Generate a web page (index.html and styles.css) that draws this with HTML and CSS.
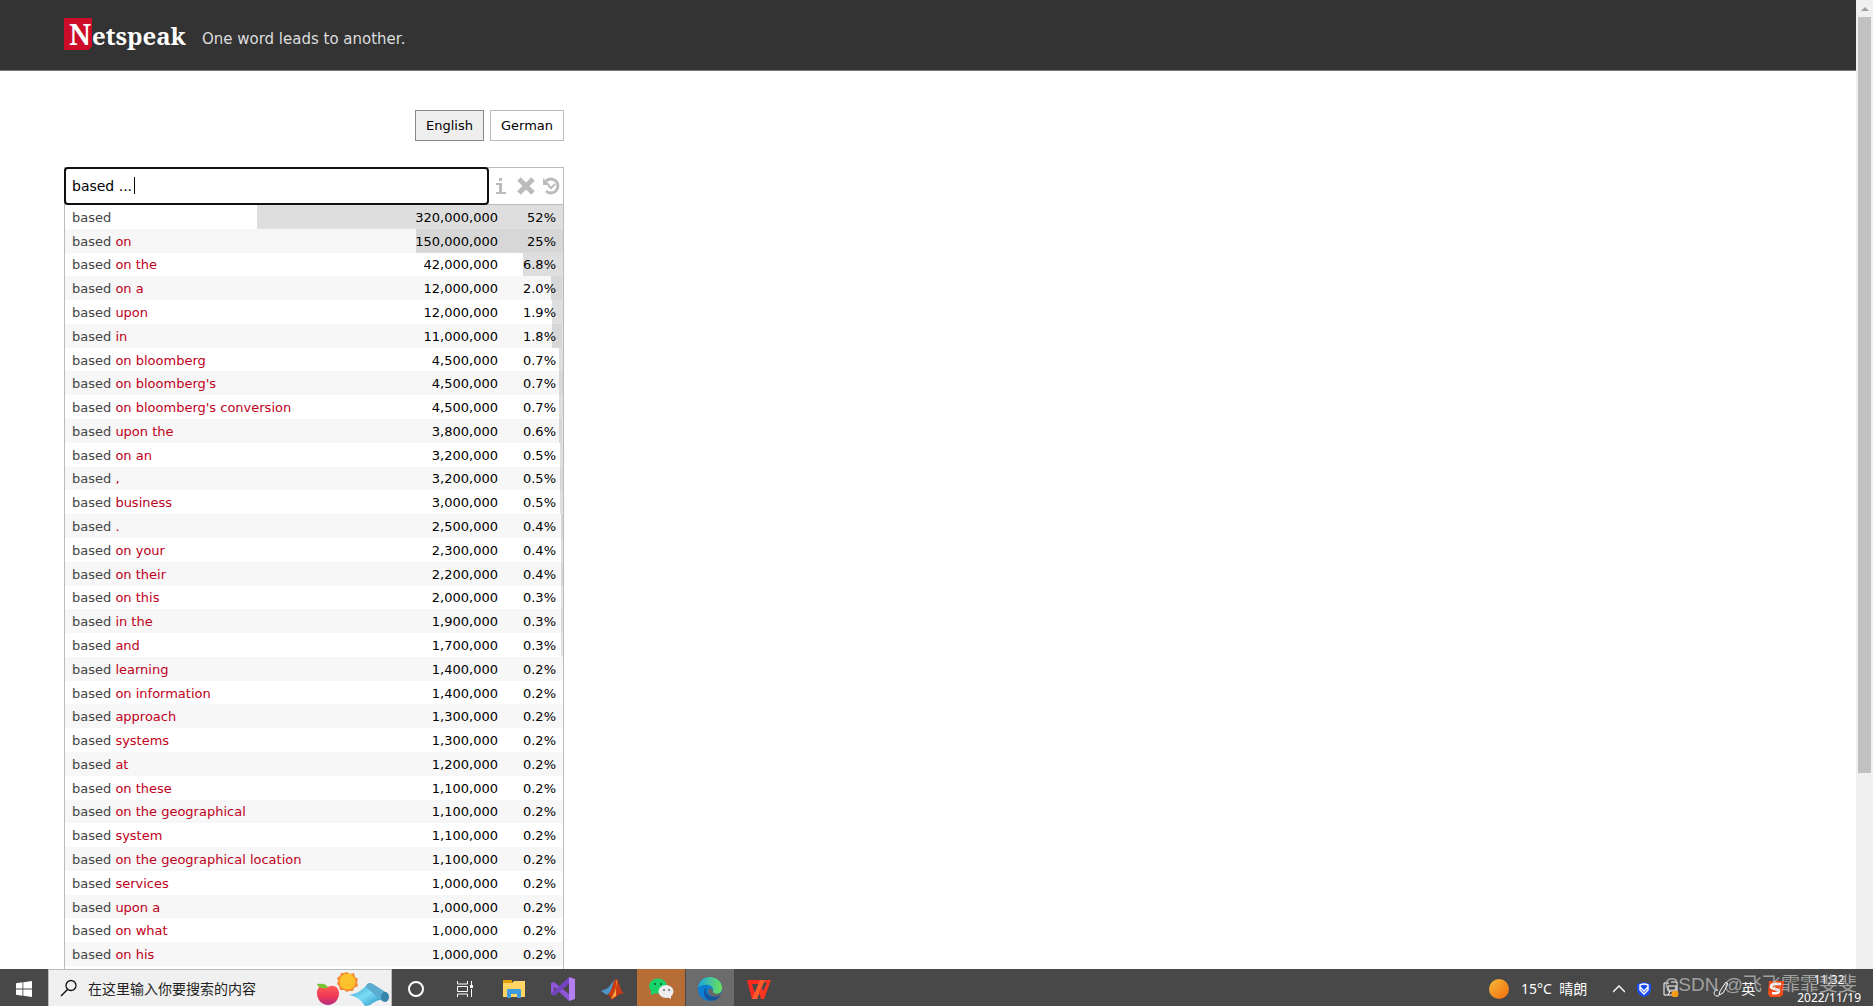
FILE: index.html
```html
<!DOCTYPE html>
<html lang="en">
<head>
<meta charset="utf-8">
<title>Netspeak</title>
<link rel="stylesheet" href="styles.css">
</head>
<body>
<div class="viewport">
  <div class="page">
    <header class="header">
      <a class="logo" href="#"><span class="logo-mark">N</span>etspeak</a>
      <p class="tagline">One word leads to another.</p>
    </header>
    <main class="content">
      <div class="languages">
        <button class="language selected" type="button">English</button>
        <button class="language" type="button">German</button>
      </div>
      <section class="search">
        <div class="query">
          <div class="query-box">
            <input class="query-input" type="text" value="based ..." aria-label="Query">
            <span class="caret"></span>
          </div>
          <div class="tools">
            <button class="tool" type="button" aria-label="Info"><svg width="20" height="20" viewBox="0 0 20 20"><path d="M8 2h3v3H8zM5 7h6v9h4v2H5v-2h3V9H5z" fill="#bbb"/></svg></button>
            <button class="tool" type="button" aria-label="Clear"><svg width="20" height="20" viewBox="0 0 20 20"><path d="M3 3l14 14M17 3L3 17" stroke="#bbb" stroke-width="5" fill="none"/></svg></button>
            <button class="tool" type="button" aria-label="History"><svg width="20" height="20" viewBox="0 0 20 20"><path d="M5 5a7 7 0 1 1 0 10" stroke="#bbb" stroke-width="3" fill="none"/><path d="M2 2v7h7z" fill="#bbb"/><path d="M7 9l3 3 4-4" stroke="#bbb" stroke-width="2" fill="none"/></svg></button>
          </div>
        </div>
        <div class="results">
          <table class="table">
            <tbody id="rows"></tbody>
          </table>
        </div>
      </section>
    </main>
  </div>
  <div class="scrollbar"><span class="scroll-arrow"></span><span class="scroll-thumb"></span></div>
</div>
<footer class="taskbar">
  <button class="task start" type="button" aria-label="Start"><svg width="16" height="16" viewBox="0 0 16 16"><path d="M0 2.200L6.500 1.300V7.600H0zM7.300 1.200L16 0V7.600H7.300zM0 8.400H6.500V14.700L0 13.800zM7.300 8.400H16V16L7.300 14.800z" fill="#fff"/></svg></button>
  <div class="finder">
    <svg width="18" height="18" viewBox="0 0 18 18"><circle cx="11" cy="6.500" r="5" fill="none" stroke="#111" stroke-width="1.300"/><path d="M7.500 10.500L1 17" stroke="#111" stroke-width="1.500"/></svg>
    <input class="finder-input" type="text" placeholder="在这里输入你要搜索的内容" aria-label="搜索">
    <svg class="art" width="74" height="36" viewBox="0 0 74 36">
      <defs>
        <linearGradient id="apple" x2="0" y2="1"><stop stop-color="#ff5d55"/><stop offset=".6" stop-color="#ee3558"/><stop offset="1" stop-color="#b02f83"/></linearGradient>
        <linearGradient id="mat" x2="1" y2="1"><stop stop-color="#3aa0cf"/><stop offset=".5" stop-color="#7adcf5"/><stop offset="1" stop-color="#2b8fc4"/></linearGradient>
      </defs>
      <path d="M31 2l3 2 4-1 1 4 3 2-1 3 1 4-4 2-1 3-4 0-2 1-3-2-4 0-1-4-2-2 1-3-1-3 3-2 1-3 3 0z" fill="#f58a33"/><circle cx="31.500" cy="11.500" r="8" fill="#fcc22e"/>
      <path d="M12 17C6 13 1 17 1 23c0 7 5 12 11 12s11-5 11-12c0-6-6-9-11-6z" fill="url(#apple)"/><path d="M12 18C5 19 2 17 1 14c6-1 10 0 11 4z" fill="#79c431"/>
      <path d="M33 25c7-1 12-4 18-10l15 15c-7-1-10 6-17 6-3-5-9-10-16-11z" fill="url(#mat)"/><path d="M50 17c0-4 4-5 7-3l14 9c3 4 0 9-5 8z" fill="#5aacd0"/><ellipse cx="69" cy="27" rx="4" ry="5" fill="#3685aa"/>
    </svg>
  </div>
  <nav class="tasks">
    <button class="task" type="button" aria-label="Cortana"><svg width="18" height="18" viewBox="0 0 18 18"><circle cx="9" cy="9" r="7" fill="none" stroke="#fff" stroke-width="2"/></svg></button>
    <button class="task" type="button" aria-label="Task view"><svg width="18" height="18" viewBox="0 0 18 18"><path d="M1.500 1v3h10V1M1.500 17v-3h10v3M1.500 6.500h10v5h-10zM15.500 1v4M15.500 9v8" fill="none" stroke="#fff"/><path d="M14 5h3v3h-3z" fill="#fff"/></svg></button>
    <button class="task" type="button" aria-label="Files"><svg width="22" height="20" viewBox="0 0 22 20"><path d="M0 1h9v4H0z" fill="#e2a10b"/><path d="M0 4l9 0 2-2h11v16H0z" fill="#ffd665"/><path d="M4 19v-8q0-1 1-1h12q1 0 1 1v8h-4v-4H8v4z" fill="#3d9be0"/></svg></button>
    <button class="task" type="button" aria-label="Visual Studio"><svg width="24" height="24" viewBox="0 0 24 24"><path d="M0 6l3-1 15 12v7L3 10v5l-3 2z" fill="#8d56d8"/><path d="M0 17l18-17v7L3 19z" fill="#7443c0"/><path d="M18 0l6 2v20l-6 2z" fill="#b57ff2"/></svg></button>
    <button class="task" type="button" aria-label="MATLAB"><svg width="24" height="22" viewBox="0 0 24 22"><path d="M1 13l7-3 7-9-2 11-6 5z" fill="#4d94c8"/><path d="M7 17C12 16 12 3 16 1c3 0 4 12 8 15-4-1-5 0-8 3l-5 3c0-3-1-5-4-5z" fill="#c93b14"/><path d="M16 1c2 5-1 13-5 20l5-3z" fill="#f9a73e"/></svg></button>
    <button class="task alert" type="button" aria-label="WeChat"><svg width="26" height="22" viewBox="0 0 26 22"><ellipse cx="10" cy="8" rx="9" ry="7.500" fill="#18d36a"/><path d="M3 12l0 5 5-2z" fill="#18d36a"/><ellipse cx="18" cy="13.500" rx="7.500" ry="6.500" fill="#eee"/><path d="M19 19l4 2v-4z" fill="#eee"/><path d="M6 5h2v2H6zM12 5h2v2h-2z" fill="#08733a"/><path d="M15 11h2v2h-2zM20 11h2v2h-2z" fill="#888"/></svg></button>
    <button class="task active" type="button" aria-label="Edge"><svg width="24" height="24" viewBox="0 0 24 24"><defs><linearGradient id="edge" x2="1" y2="0"><stop stop-color="#1ba5df"/><stop offset="1" stop-color="#6de35a"/></linearGradient></defs><circle cx="12" cy="12" r="12" fill="#0d7ed2"/><path d="M0 11C1 3 7 0 12 0c7 0 12 5 12 11 0 4-3 6-6 6-4 0-4-2-3-4 1-5-9-8-15-2z" fill="url(#edge)"/><path d="M9 10c-3 6 2 11 9 9l5-1c-4 7-13 7-16 2-2-4-1-8 2-10z" fill="#16549c"/><path d="M15 13c-1 3 2 5 8 3l1 1-2 2c-7 2-12-1-12-5 0-2 3-4 5-1z" fill="#666"/></svg></button>
    <button class="task" type="button" aria-label="WPS"><svg width="24" height="19" viewBox="0 0 24 19"><path d="M0 0h15l-2 4H5l4 13 2 2H5z" fill="#fb2b20"/><path d="M5 19L13 0h5l-8 19z" fill="#ff5a2a"/><path d="M12 12l2-5 2 4 4-8h-2V0h6l-7 19h-3z" fill="#fb3520"/></svg></button>
  </nav>
  <div class="tray">
    <span class="sun"></span>
    <span class="weather">15°C&nbsp; 晴朗</span>
    <svg width="12" height="8" viewBox="0 0 12 8"><path d="M0 7l6-6 6 6" fill="none" stroke="#fff" stroke-width="1.400"/></svg>
    <svg width="14" height="15" viewBox="0 0 14 15"><path d="M7 0l7 2v6q-1 5-7 7-6-2-7-7V2z" fill="#1c4df0"/><path d="M3 5l4 4 4-4M3 3q4-2 8 0v5l-4 4-4-4z" fill="none" stroke="#fff" stroke-width="1.400"/></svg>
    <svg width="16" height="16" viewBox="0 0 16 16"><path d="M6 2H1v12h8M5 5h8v5H5zM8 1h6v10M5 14l2-4" fill="none" stroke="#fff"/><circle cx="12" cy="13" r="3.500" fill="#f59b16"/></svg>
    <svg class="pen" width="16" height="16" viewBox="0 0 16 16"><path d="M7 10l6-9 2 2-5 9-4 2zM5 9c-5 0-5 6-1 6h2" fill="none" stroke="#fff"/></svg>
    <span class="ime">英</span>
    <svg width="18" height="16" viewBox="0 0 18 16"><path d="M2 0h15l-1 14-3 2H3l-2-3z" fill="#f04c1c"/><path d="M14 3H8Q4 3 4 6q0 1 4 2t4 2q0 3-7 2" fill="none" stroke="#fff" stroke-width="2.500"/></svg>
    <time class="clock"><span>11:32</span><span>2022/11/19</span></time>
  </div>
  <span class="watermark">CSDN @飞飞霏霏斐斐</span>
</footer>
<script src="results.js"></script>
</body>
</html>
```
FILE: styles.css
```css
* { box-sizing: border-box; }

body {
  margin: 0;
  height: 100vh;
  display: flex;
  flex-direction: column;
  overflow: hidden;
  background: #fff;
  color: #000;
  font: 13px/20px Verdana, "DejaVu Sans", sans-serif;
}

button, input {
  margin: 0;
  padding: 0;
  border: 0;
  background: none;
  color: inherit;
  font: inherit;
}

svg { display: block; flex: none; }

.viewport { flex: 1; min-height: 0; display: flex; }
.page { flex: 1; min-width: 0; overflow: hidden; }

.header {
  display: flex;
  align-items: center;
  gap: 16px;
  height: 71px;
  padding: 0 64px;
  background: #333;
  border-bottom: 1px solid #777;
}

.logo {
  display: flex;
  align-items: baseline;
  color: #fff;
  font: bold 24px/32px "Noto Serif", "Droid Serif", "DejaVu Serif", "Liberation Serif", serif;
  text-decoration: none;
}

.logo-mark {
  width: 28px;
  padding-left: 5px;
  background: linear-gradient(315deg, transparent 5px, #cc0c28 5px) no-repeat;
  background-size: 32px 32px;
  font-size: 28px;
}

.tagline { margin: 7px 0 0; color: #ddd; font-size: 15px; }

.content { width: 564px; padding: 39px 0 0 64px; }

.languages { display: flex; justify-content: flex-end; gap: 6px; }

.language {
  height: 31px;
  padding: 1px 10px 0;
  border: 1px solid #bbb;
}

.selected { background: #eee; border-color: #888; }

.search { margin-top: 26px; }

.query {
  display: flex;
  height: 38px;
  border: 1px solid #bbb;
}

.query-box { position: relative; flex: 1; margin: -1px 0 -1px -1px; }

.query-input {
  width: 100%;
  height: 38px;
  padding: 0 6px;
  border: 2px solid #101010;
  border-radius: 4px;
  font-size: 14px;
}

.caret {
  position: absolute;
  left: 70px;
  top: 10px;
  width: 1px;
  height: 17px;
  background: #000;
}

.tools { display: flex; align-items: center; gap: 5px; padding: 0 2px; }

.results {
  border: 1px solid #bbb;
  border-top: 0;
  padding-bottom: 24px;
}

.table {
  width: 100%;
  height: 761px;
  border-collapse: collapse;
  line-height: 20px;
}

.table td { padding: 2px 7px 0; color: #444; white-space: nowrap; }
.table b { color: #c00020; font-weight: normal; }
.table .count, .table .percent { color: #000; text-align: right; }
.table .percent { width: 58px; }

.row {
  background-image: linear-gradient(rgba(0, 0, 0, 0.13), rgba(0, 0, 0, 0.13));
  background-repeat: no-repeat;
  background-position: right;
  background-size: calc(var(--share) * 1.18) 100%;
}

.row:nth-child(even) { background-color: #f7f7f7; }

.scrollbar {
  display: flex;
  flex-direction: column;
  align-items: center;
  width: 17px;
  background: #f0f0f0;
}

.scroll-arrow {
  margin: 7px 0 6px;
  border: 4px solid transparent;
  border-top: 0;
  border-bottom-color: #a0a0a0;
}

.scroll-thumb { width: 13px; height: 78%; background: #c1c1c1; }

.taskbar {
  position: relative;
  display: flex;
  height: 37px;
  background: #484848;
  color: #fff;
  font: 14px/20px "Noto Sans", "Noto Sans CJK SC", sans-serif;
}

.task {
  display: flex;
  align-items: center;
  justify-content: center;
  width: 48px;
  height: 37px;
  padding-top: 3px;
}

.finder {
  display: flex;
  align-items: center;
  gap: 10px;
  width: 344px;
  padding-left: 11px;
  background: #f0f0f0;
  border: 1px solid #bbb;
  border-bottom: 0;
}

.finder-input { flex: 1; min-width: 0; height: 30px; }
.finder-input::placeholder { color: #222; opacity: 1; }
.art { margin-right: 1px; }

.tasks { display: flex; gap: 1px; }
.alert { background: #b76d36; }
.active { background: #6c6c6c; }

.tray { display: flex; align-items: center; gap: 12px; margin-left: auto; padding: 3px 12px 0 0; }
.sun { width: 20px; height: 20px; border-radius: 50%; background: linear-gradient(135deg, #f5b93a, #f36c0c); }
.weather { margin-right: 14px; }
.pen { margin-left: 22px; }

.clock {
  display: flex;
  flex-direction: column;
  align-items: center;
  font-size: 12px;
  line-height: 18px;
}

.watermark {
  position: absolute;
  right: 16px;
  top: 4px;
  color: rgba(200, 200, 200, 0.7);
  font: 19px/24px "Liberation Sans", "Noto Sans CJK SC", sans-serif;
}
```
FILE: results.js
```js
const results = [
  ["", "320,000,000", "52%"],
  ["on", "150,000,000", "25%"],
  ["on the", "42,000,000", "6.8%"],
  ["on a", "12,000,000", "2.0%"],
  ["upon", "12,000,000", "1.9%"],
  ["in", "11,000,000", "1.8%"],
  ["on bloomberg", "4,500,000", "0.7%"],
  ["on bloomberg's", "4,500,000", "0.7%"],
  ["on bloomberg's conversion", "4,500,000", "0.7%"],
  ["upon the", "3,800,000", "0.6%"],
  ["on an", "3,200,000", "0.5%"],
  [",", "3,200,000", "0.5%"],
  ["business", "3,000,000", "0.5%"],
  [".", "2,500,000", "0.4%"],
  ["on your", "2,300,000", "0.4%"],
  ["on their", "2,200,000", "0.4%"],
  ["on this", "2,000,000", "0.3%"],
  ["in the", "1,900,000", "0.3%"],
  ["and", "1,700,000", "0.3%"],
  ["learning", "1,400,000", "0.2%"],
  ["on information", "1,400,000", "0.2%"],
  ["approach", "1,300,000", "0.2%"],
  ["systems", "1,300,000", "0.2%"],
  ["at", "1,200,000", "0.2%"],
  ["on these", "1,100,000", "0.2%"],
  ["on the geographical", "1,100,000", "0.2%"],
  ["system", "1,100,000", "0.2%"],
  ["on the geographical location", "1,100,000", "0.2%"],
  ["services", "1,000,000", "0.2%"],
  ["upon a", "1,000,000", "0.2%"],
  ["on what", "1,000,000", "0.2%"],
  ["on his", "1,000,000", "0.2%"]
];

document.getElementById("rows").innerHTML = results.map(([words, count, percent]) => {
  const share = parseFloat(percent) < 0.3 ? "0%" : percent;
  return `<tr class="row" style="--share: ${share}"><td>based <b>${words}</b></td>` +
    `<td class="count">${count}</td><td class="percent">${percent}</td></tr>`;
}).join("");
```
